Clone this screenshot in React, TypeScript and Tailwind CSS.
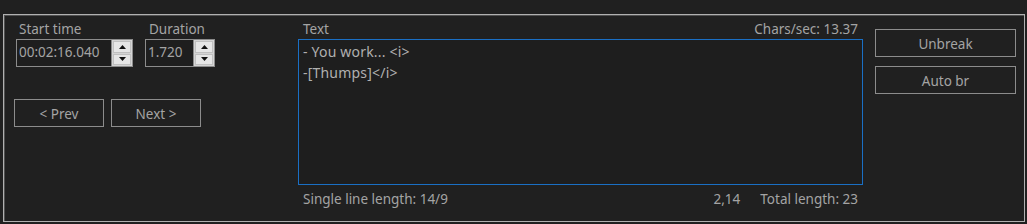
import React from "react";

const font = { fontFamily: '"Noto Sans", "Open Sans", sans-serif' };

function Spin() {
  return (
    <div className="flex flex-col w-[21px] h-full border-l border-[#8a8a8a] bg-[#d4d4d4] p-[1px] gap-[1px]">
      <div className="flex-1 bg-[#e6e6e6] border border-[#c0c0c0] flex items-center justify-center">
        <svg width="7" height="4" viewBox="0 0 7 4"><polygon points="3.5,0 7,4 0,4" fill="#111" /></svg>
      </div>
      <div className="flex-1 bg-[#e6e6e6] border border-[#c0c0c0] flex items-center justify-center">
        <svg width="7" height="4" viewBox="0 0 7 4"><polygon points="0,0 7,0 3.5,4" fill="#111" /></svg>
      </div>
    </div>
  );
}

function Btn({ label, w }: { label: string; w: string }) {
  return (
    <div className={`${w} h-[28px] border border-[#8c8c8c] flex items-center justify-center pt-[2px] text-[13.5px] text-[#a4a4a4]`}>
      {label}
    </div>
  );
}

export default function App() {
  return (
    <div className="w-[1027px] h-[224px] bg-[#202020] pt-[14px] pl-[3px] pr-[2px] pb-[2px]" style={font}>
      <div className="h-full border border-[#b0b0b0] shadow-[inset_1px_1px_0_#505050] flex">
        {/* left */}
        <div className="w-[294px] pl-[12px] pt-[4px]">
          <div className="flex gap-[12px]">
            <div className="w-[117px]">
              <div className="ml-[3px] text-[13.5px] leading-[20px] text-[#a4a4a4]">Start time</div>
              <div className="h-[28px] border border-[#8c8c8c] bg-[#1e1e1e] flex">
                <div className="flex-1 pl-[2px] pt-[4px] text-[13.5px] leading-[17px] text-[#a4a4a4]">00:02:16.040</div>
                <Spin />
              </div>
            </div>
            <div className="w-[70px]">
              <div className="ml-[4px] text-[13.5px] leading-[20px] text-[#a4a4a4]">Duration</div>
              <div className="h-[28px] border border-[#8c8c8c] bg-[#1e1e1e] flex">
                <div className="flex-1 pl-[2px] pt-[4px] text-[13.5px] leading-[17px] text-[#a4a4a4]">1.720</div>
                <Spin />
              </div>
            </div>
          </div>
          <div className="flex gap-[7px] mt-[32px] -ml-[2px]">
            <Btn label="< Prev" w="w-[90px]" />
            <Btn label="Next >" w="w-[90px]" />
          </div>
        </div>
        {/* middle */}
        <div className="w-[565px] pt-[4px] flex flex-col">
          <div className="flex justify-between text-[13.5px] leading-[20px] text-[#a4a4a4] pl-[5px] pr-[5px]">
            <span>Text</span>
            <span>Chars/sec: 13.37</span>
          </div>
          <div className="h-[146px] border border-[#1a6fc4] bg-[#1e1e1e] px-[4px] pt-[1px] text-[14px] leading-[21px] text-[#b0b0b0] tracking-[0.2px]">
            <div>- You work... &lt;i&gt;</div>
            <div>-[Thumps]&lt;/i&gt;</div>
          </div>
          <div className="flex text-[13.5px] leading-[20px] text-[#a4a4a4] pl-[5px] pr-[5px] mt-[4px]">
            <span className="flex-1">Single line length: 14/9</span>
            <span className="mr-[20px]">2,14</span>
            <span>Total length: 23</span>
          </div>
        </div>
        {/* right */}
        <div className="pl-[12px] pt-[14px] flex flex-col gap-[9px]">
          <Btn label="Unbreak" w="w-[141px]" />
          <Btn label="Auto br" w="w-[141px]" />
        </div>
      </div>
    </div>
  );
}
